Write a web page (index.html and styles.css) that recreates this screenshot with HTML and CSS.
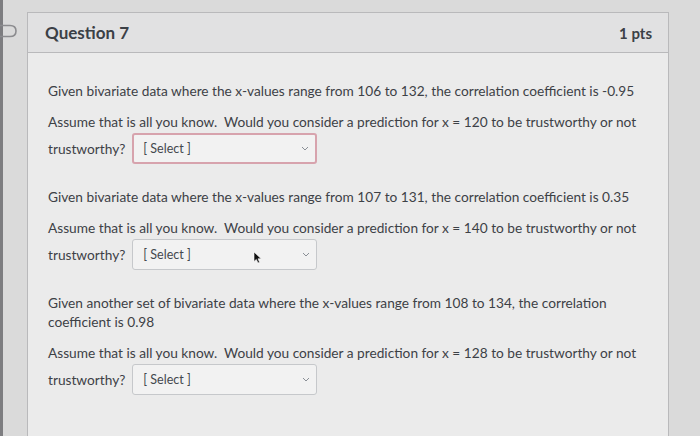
FILE: index.html
```html
<!DOCTYPE html>
<html>
<head>
<meta charset="utf-8">
<link rel="stylesheet" href="styles.css">
</head>
<body>
<div class="page">
  <div class="rail">
    <svg class="flag" width="18" height="14" viewBox="0 0 18 14"><path d="M-2 1.5 H10 Q16 1.5 16 7 Q16 12.5 10 12.5 H-2" fill="none" stroke="#8c8c8f" stroke-width="1.6"/></svg>
  </div>
  <div class="card">
    <div class="card-header">
      <span class="q-title">Question 7</span>
      <span class="q-pts">1 pts</span>
    </div>
    <div class="card-body">
      <div class="block">
        <p>Given bivariate data where the x-values range from 106 to 132, the correlation coefficient is -0.95</p>
        <p class="gap">Assume that is all you know.&nbsp; Would you consider a prediction for x = 120 to be trustworthy or not</p>
        <div class="answer">
          <span>trustworthy?</span>
          <div class="select focused"><span>[ Select ]</span><svg width="8" height="5" viewBox="0 0 8 5"><path d="M1 1 L4 4 L7 1" fill="none" stroke="#8a8f96" stroke-width="1"/></svg></div>
        </div>
      </div>
      <div class="block">
        <p>Given bivariate data where the x-values range from 107 to 131, the correlation coefficient is 0.35</p>
        <p class="gap">Assume that is all you know.&nbsp; Would you consider a prediction for x = 140 to be trustworthy or not</p>
        <div class="answer">
          <span>trustworthy?</span>
          <div class="select"><span>[ Select ]</span><svg width="8" height="5" viewBox="0 0 8 5"><path d="M1 1 L4 4 L7 1" fill="none" stroke="#8a8f96" stroke-width="1"/></svg></div>
        </div>
      </div>
      <div class="block">
        <p>Given another set of bivariate data where the x-values range from 108 to 134, the correlation coefficient is 0.98</p>
        <p class="gap">Assume that is all you know.&nbsp; Would you consider a prediction for x = 128 to be trustworthy or not</p>
        <div class="answer">
          <span>trustworthy?</span>
          <div class="select"><span>[ Select ]</span><svg width="8" height="5" viewBox="0 0 8 5"><path d="M1 1 L4 4 L7 1" fill="none" stroke="#8a8f96" stroke-width="1"/></svg></div>
        </div>
      </div>
    </div>
  </div>
  <svg class="cursor" width="10" height="13" viewBox="0 0 10 13"><path d="M1 1 L1 10.5 L3.3 8.4 L5 12 L6.6 11.3 L5 7.8 L8.2 7.8 Z" fill="#111" stroke="#fff" stroke-width="0.6"/></svg>
</div>
</body>
</html>
```

FILE: styles.css
```css
html, body {
  margin: 0;
  padding: 0;
}
body {
  width: 700px;
  height: 436px;
  overflow: hidden;
  background: #dadada;
  font-family: Lato, "Open Sans", sans-serif;
  color: #3d4146;
}
.page {
  position: relative;
  display: flex;
  height: 436px;
  padding-top: 12px;
  box-sizing: border-box;
  border-left: 3px solid #7d7d80;
}
.rail {
  width: 24px;
  flex: none;
  position: relative;
}
.flag {
  position: absolute;
  left: -3px;
  top: 12px;
}
.card {
  width: 640px;
  flex: none;
  border: 1px solid #b9b9bb;
  border-bottom: none;
  background: #ebebeb;
}
.card-header {
  height: 39px;
  display: flex;
  align-items: center;
  justify-content: space-between;
  padding: 0 16px 0 17px;
  background: #e1e1e2;
  border-bottom: 1px solid #b9b9bb;
}
.q-title {
  font-weight: 700;
  font-size: 17px;
  color: #3b4046;
}
.q-pts {
  font-weight: 700;
  font-size: 15px;
  color: #3b4046;
}
.card-body {
  padding: 28px 20px 0 20px;
  font-size: 13.7px;
}
.card-body p {
  margin: 0;
  line-height: 19px;
  width: 605px;
}
.card-body p.gap {
  margin-top: 12px;
}
.block {
  margin-bottom: 23px;
}
.answer {
  display: flex;
  align-items: center;
  gap: 7px;
  margin-top: 2px;
  height: 31px;
}
.select {
  width: 185px;
  height: 31px;
  box-sizing: border-box;
  border: 1px solid #c6c8cb;
  border-radius: 3px;
  background: #f2f2f2;
  display: flex;
  align-items: center;
  justify-content: space-between;
  padding: 0 6px 0 10px;
  font-size: 12.5px;
  color: #44484d;
}
.select.focused {
  border: 2px solid #d7a3ad;
  padding-left: 9px;
}
.cursor {
  position: absolute;
  left: 250px;
  top: 251px;
}
```
